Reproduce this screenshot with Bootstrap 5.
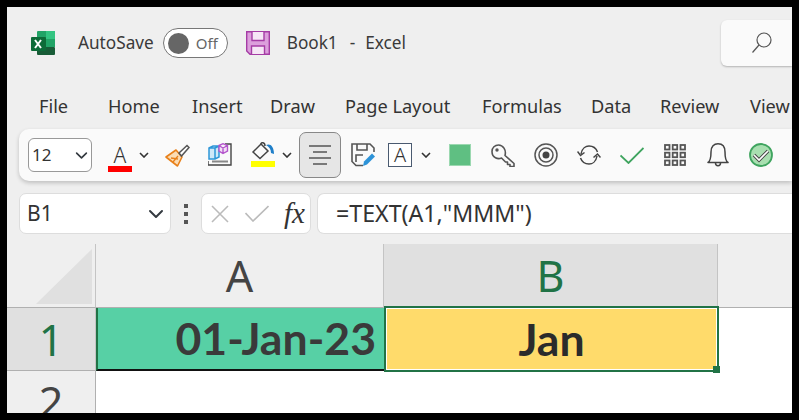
<!DOCTYPE html>
<html lang="en">
<head>
<meta charset="UTF-8">
<title>Book1 - Excel</title>
<link href="https://cdn.jsdelivr.net/npm/bootstrap@5.3.0/dist/css/bootstrap.min.css" rel="stylesheet">
<style>
  html, body { height: 100%; }
  body { background: #000; padding: 7px; overflow: hidden; font-family: "Noto Sans", "Open Sans", sans-serif; color: #333; }
  .xl-window { width: 785px; height: 406px; background: #efefef; overflow: hidden; }

  .title-row { height: 46px; margin-top: 13px; padding-left: 24px; }
  .app-logo { margin-right: 23px; }
  .title-txt { font-size: 17.2px; color: #3a3a3a; white-space: nowrap; }
  .title-dash { margin: 0 10px 0 12px; }
  .save-toggle { width: 65px; height: 30px; margin: 0 18px 0 9px; background: #fff; border: 1px solid #777; border-radius: 15px; padding-left: 4px; }
  .toggle-knob { width: 21px; height: 21px; background: #666; border-radius: 50%; margin-right: 7px; }
  .toggle-txt { font-size: 15px; color: #666; }
  .save-ico { margin-right: 17px; }
  .search-box { width: 71px; height: 46px; background: #fafafa; border-radius: 6px 0 0 6px; box-shadow: 0 1px 2px rgba(0,0,0,.25); padding-left: 31px; }

  .tab-row { height: 63px; padding: 28px 0 0 32px; display: grid; grid-template-columns: 69px 84px 78px 75px 137px 109px 69px 90px auto; font-size: 18.2px; line-height: 24px; color: #333; white-space: nowrap; }

  .tool-row { height: 52px; margin-left: 12px; padding-left: 9px; background: #fafafa; border-radius: 10px 0 0 10px; box-shadow: 0 2px 4px rgba(0,0,0,.2); display: grid; grid-template-columns: 80px 31px 26px 43px 43px 31px 17px 52px 37px 33px 28px 42px 43px 43px 43px 44px 43px 42px 24px; align-items: center; justify-items: start; }
  .size-pick { width: 64px; height: 34px; padding: 0 0 0 3px; font-size: 17px; font-family: "Noto Sans", sans-serif; color: #333; border: 1px solid #999; border-radius: 6px; background-color: #fff; background-position: right 3px center; background-size: 13px; }
  .align-btn { width: 42px; height: 46px; padding: 0; background: #e6e6e6; border: 1px solid #888; border-radius: 7px; display: flex; align-items: center; justify-content: center; }
  .font-colour { width: 24px; text-align: center; font-size: 21px; font-weight: 300; line-height: 20px; color: #333; padding-top: 6px; }
  .colour-bar { height: 6px; margin-top: 1px; background: #f00; }
  .font-box { width: 24px; height: 24px; display: flex; align-items: center; justify-content: center; background: #fff; border: 1.4px solid #4a5a70; font-size: 20px; font-weight: 300; line-height: 20px; color: #333; }

  .bar-row { height: 41px; margin: 12px 0 10px 12px; }
  .name-pick { width: 152px; height: 41px; padding: 0 0 0 7px; font-size: 21px; font-family: "Noto Sans", sans-serif; color: #333; border: 1px solid #ddd; border-radius: 7px; background-color: #fff; background-position: right 6px center; background-size: 16px; }
  .dots-col { width: 30px; }
  .dot-mark { width: 4px; height: 4px; background: #555; margin: 2px 0; }
  .fx-box { width: 110px; height: 41px; background: #fff; border: 1px solid #ddd; border-radius: 7px; padding-left: 9px; margin-right: 6px; }
  .fx-txt { font-family: "Liberation Serif", serif; font-style: italic; font-size: 29px; line-height: 1; color: #333; margin-left: 15px; }
  .formula-box { height: 41px; background: #fff; border: 1px solid #ddd; border-right: 0; border-radius: 7px 0 0 7px; padding-left: 18px; font-size: 23.2px; color: #333; white-space: nowrap; }

  .sheet-grid { display: grid; grid-template-columns: 89px 288px 334px 1fr; grid-template-rows: 64px 63px 42px; position: relative; }
  .head-cell { display: flex; align-items: center; justify-content: center; font-size: 43px; font-weight: 400; color: #444; border-right: 1px solid #c4c4c4; border-bottom: 1px solid #b0b0b0; line-height: 1; }
  .corner-cell { align-items: flex-end; justify-content: flex-end; padding: 0 3px 3px 0; }
  .head-on { background: #e0e0e0; color: #217346; }
  .head-row2 { align-items: flex-start; padding-top: 9px; border-bottom: 0; border-right-color: #b0b0b0; overflow: hidden; }
  .head-rest { border-right: 0; }
  .cell-a { background: #57d0a5; border-bottom: 2px solid #111; border-left: 2px solid #217346; display: flex; align-items: center; justify-content: flex-end; padding-right: 8px; font-family: Lato, sans-serif; font-weight: 700; font-size: 44.6px; color: #3a3a3a; line-height: 1; }
  .cell-b { background: #ffdb6b; border: 2px solid #217346; box-shadow: inset 0 0 0 1px #fff; margin: -2px -1px -1px 0; display: flex; align-items: center; justify-content: center; font-family: Lato, sans-serif; font-weight: 700; font-size: 44.6px; color: #2b2b2b; line-height: 1; position: relative; }
  .fill-handle { position: absolute; right: -3px; bottom: -3px; width: 7px; height: 7px; background: #217346; }
  .blank-cell { background: #fff; }
</style>
</head>
<body>
<div class="xl-window">

  <div class="title-row d-flex align-items-center">
    <svg class="app-logo" width="24" height="24" viewBox="0 0 24 24">
      <rect x="6" width="18" height="8" rx="1" fill="#21a366"/>
      <rect x="15" width="9" height="8" fill="#33c481"/>
      <rect x="6" y="8" width="18" height="8" fill="#107c41"/>
      <rect x="15" y="8" width="9" height="8" fill="#21a366"/>
      <rect x="6" y="16" width="18" height="8" rx="1" fill="#185c37"/>
      <rect y="6" width="15" height="14" rx="1" fill="#0d6b38"/>
      <path d="M4 9l6 8M10 9l-6 8" stroke="#fff" stroke-width="2"/>
    </svg>
    <span class="title-txt">AutoSave</span>
    <div class="save-toggle d-flex align-items-center">
      <span class="toggle-knob"></span><span class="toggle-txt">Off</span>
    </div>
    <svg class="save-ico" width="24" height="24" viewBox="0 0 24 24">
      <path d="M.7.7H23.3V23.3H4L.7 20Z" fill="#dc9fdc" stroke="#a53ca5" stroke-width="1.4"/>
      <path d="M6 1V9.5H18V1M5.5 23V15H18.5V23" fill="#f6e6f6" stroke="#a53ca5" stroke-width="1.4"/>
    </svg>
    <span class="title-txt">Book1</span><span class="title-txt title-dash">-</span><span class="title-txt">Excel</span>
    <div class="search-box d-flex align-items-center ms-auto">
      <svg width="20" height="22" viewBox="0 0 20 22" fill="none" stroke="#555" stroke-width="1.2">
        <circle cx="12" cy="8" r="7"/><path d="M7 13L.5 20.500"/>
      </svg>
    </div>
  </div>

  <div class="tab-row">
    <span>File</span><span>Home</span><span>Insert</span><span>Draw</span><span>Page Layout</span><span>Formulas</span><span>Data</span><span>Review</span><span>View</span>
  </div>

  <div class="tool-row">
    <select class="form-select size-pick"><option>12</option></select>

    <div class="font-colour">A<div class="colour-bar"></div></div>
    <svg width="10" height="6" viewBox="0 0 10 6" fill="none" stroke="#333" stroke-width="1.6"><path d="M1 1l4 4 4-4"/></svg>

    <svg width="25" height="23" viewBox="0 0 25 23">
      <path d="M1 13L11 6L17 13L12.500 22Z" fill="#fbdcb4" stroke="#e8801a" stroke-width="1.6" stroke-linejoin="round"/>
      <path d="M6 14L13 15M8 18L13 12" stroke="#e8801a" stroke-width="1.300"/>
      <path d="M14 9L22 1.500L24 3.500L16.500 12Z" fill="#fff" stroke="#555" stroke-width="1.500"/>
    </svg>

    <svg width="24" height="24" viewBox="0 0 24 24" fill="none">
      <path d="M17 1H23V22H0V18" stroke="#444" stroke-width="1.400"/>
      <path d="M4 18.500H20" stroke="#888" stroke-width="2"/>
      <path d="M1 5L5 3H11V14L7 16H1ZM1 5H7V16M7 5L11 3" fill="#cfe8f8" stroke="#2e96d8" stroke-width="1.500"/>
      <path d="M11 2.500L15 .7L19.500 2.500V8L15 10.500L11 8ZM11 2.500L15 5L19.500 2.500M15 5V10.500" fill="#f2def5" stroke="#b455cc" stroke-width="1.400"/>
    </svg>

    <svg width="24" height="26" viewBox="0 0 24 26">
      <path d="M2 10L10 2L17 9L9 16.500Z" fill="none" stroke="#444" stroke-width="1.500"/>
      <path d="M10 2C10 0 14 0 14 4" fill="none" stroke="#444" stroke-width="1.500"/>
      <path d="M15 3C19 1 23 4 23 12L20 11C20 7 18 5 15 3Z" fill="#1f7fc9"/>
      <rect y="19" width="24" height="6" fill="#ff0"/>
    </svg>
    <svg width="10" height="6" viewBox="0 0 10 6" fill="none" stroke="#333" stroke-width="1.6"><path d="M1 1l4 4 4-4"/></svg>

    <button type="button" class="btn align-btn">
      <svg width="22" height="20" viewBox="0 0 22 20" stroke="#555" stroke-width="1.700">
        <path d="M0 1H22M4 7H18M0 13H22M4 19H18"/>
      </svg>
    </button>

    <svg width="24" height="24" viewBox="0 0 24 24" fill="none">
      <path d="M12 22.500H5L1 18.500V1H19L23 5V9" stroke="#555" stroke-width="1.600"/>
      <path d="M6 1V7H16V1M5 19V12H12" stroke="#555" stroke-width="1.600"/>
      <path d="M12 23L13 18.500L21 10.500L24 13.500L16 21.500Z" fill="#2d93d8"/>
    </svg>

    <div class="font-box">A</div>
    <svg width="10" height="6" viewBox="0 0 10 6" fill="none" stroke="#333" stroke-width="1.6"><path d="M1 1l4 4 4-4"/></svg>

    <svg width="22" height="22" viewBox="0 0 22 22">
      <rect x=".5" y=".5" width="21" height="21" fill="#5fbf82" stroke="#9bd8b0"/>
    </svg>

    <svg width="24" height="23" viewBox="0 0 24 23" fill="none" stroke="#555" stroke-width="1.600">
      <path d="M14 11.500L23 19.500V22.500H19V20.500H16.500V18H14.500L10.500 14C7 15.500 1 14 1 7.500C1 3.500 4 1 7.500 1C12 1 15.500 6 14 11.500Z" stroke-linejoin="round"/>
      <circle cx="6" cy="6" r="1.700" fill="#555" stroke="none"/>
    </svg>

    <svg width="24" height="24" viewBox="0 0 24 24" fill="none" stroke="#555">
      <circle cx="12" cy="12" r="11" stroke-width="1.500"/>
      <circle cx="12" cy="12" r="7" stroke-width="1.500"/>
      <circle cx="12" cy="12" r="3.500" fill="#444" stroke="none"/>
    </svg>

    <svg width="24" height="22" viewBox="0 0 24 22" fill="none" stroke="#444" stroke-width="1.500">
      <path d="M4 10C5 4 9 2 12 2C16 2 19 4 20.500 8M20 12C19 18 15 20 12 20C8 20 5 18 3.500 14"/>
      <path d="M.5 7.500L3.500 11.500L7.500 8.500M16.500 13.500L20.500 10L23.500 13.500"/>
    </svg>

    <svg width="24" height="17" viewBox="0 0 24 17" fill="none" stroke="#3fa45f" stroke-width="1.800"><path d="M.5 8.500L8.500 16L23.500 1"/></svg>

    <svg width="22" height="22" viewBox="0 0 22 22" fill="#fafafa" stroke="#555" stroke-width="1.800">
      <rect x="1" y="1" width="4.500" height="4.500"/><rect x="8.700" y="1" width="4.500" height="4.500"/><rect x="16.500" y="1" width="4.500" height="4.500"/>
      <rect x="1" y="8.700" width="4.500" height="4.500"/><rect x="8.700" y="8.700" width="4.500" height="4.500"/><rect x="16.500" y="8.700" width="4.500" height="4.500"/>
      <rect x="1" y="16.500" width="4.500" height="4.500"/><rect x="8.700" y="16.500" width="4.500" height="4.500"/><rect x="16.500" y="16.500" width="4.500" height="4.500"/>
    </svg>

    <svg width="22" height="24" viewBox="0 0 22 24" fill="none" stroke="#444" stroke-width="1.500">
      <path d="M1 19.500C3.500 18 4 15 4 9C4 3.500 7 .8 11 .8C15 .8 18 3.500 18 9C18 15 18.500 18 21 19.500Z" stroke-linejoin="round"/>
      <path d="M8.500 20C8.500 23.500 13.500 23.500 13.500 20"/>
    </svg>

    <svg width="24" height="24" viewBox="0 0 24 24" fill="none">
      <circle cx="12" cy="12" r="11" fill="#a8dfb0" stroke="#3fa45f" stroke-width="1.800"/>
      <path d="M5 12L10 17L19 8" stroke="#444" stroke-width="3.500"/>
      <path d="M5 12L10 17L19 8" stroke="#fff" stroke-width="1.600"/>
    </svg>
  </div>

  <div class="bar-row d-flex align-items-center">
    <select class="form-select name-pick"><option>B1</option></select>
    <div class="dots-col d-flex flex-column align-items-center">
      <span class="dot-mark"></span><span class="dot-mark"></span><span class="dot-mark"></span>
    </div>
    <div class="fx-box d-flex align-items-center">
      <svg width="18" height="18" viewBox="0 0 18 18" fill="none" stroke="#bbb" stroke-width="1.600"><path d="M1 1L17 17M17 1L1 17"/></svg>
      <svg class="ms-3" width="24" height="17" viewBox="0 0 24 17" fill="none" stroke="#bbb" stroke-width="1.600"><path d="M.5 8L8 16L23.500 1"/></svg>
      <span class="fx-txt">fx</span>
    </div>
    <div class="formula-box d-flex align-items-center flex-grow-1">=TEXT(A1,"MMM")</div>
  </div>

  <div class="sheet-grid">
    <div class="head-cell corner-cell">
      <svg width="56" height="55" viewBox="0 0 56 55"><path d="M56 0V55H0Z" fill="#e0e0e0"/></svg>
    </div>
    <div class="head-cell">A</div>
    <div class="head-cell head-on">B</div>
    <div class="head-cell head-rest"></div>

    <div class="head-cell head-on">1</div>
    <div class="cell-a">01-Jan-23</div>
    <div class="cell-b">Jan<span class="fill-handle"></span></div>
    <div class="blank-cell"></div>

    <div class="head-cell head-row2">2</div>
    <div class="blank-cell"></div>
    <div class="blank-cell"></div>
    <div class="blank-cell"></div>
  </div>

</div>
<script src="https://cdn.jsdelivr.net/npm/bootstrap@5.3.0/dist/js/bootstrap.bundle.min.js"></script>
</body>
</html>
